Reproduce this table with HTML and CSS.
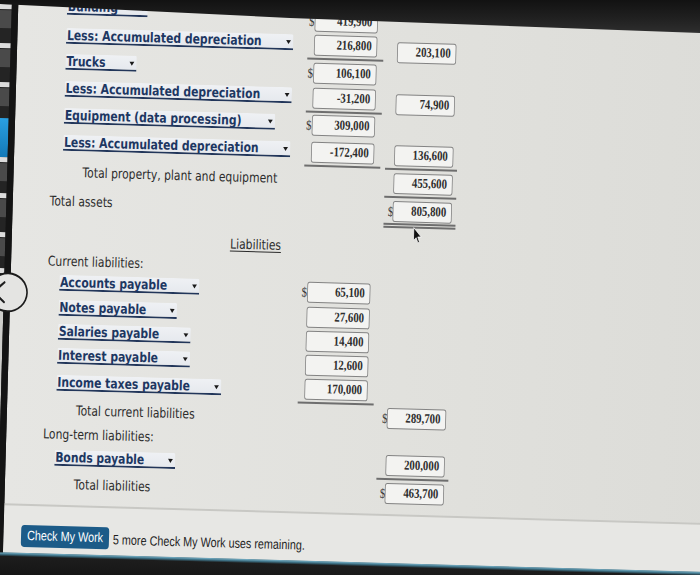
FILE: index.html
```html
<!DOCTYPE html>
<html lang="en">
<head>
<meta charset="utf-8">
<title>Balance sheet</title>
<link rel="stylesheet" href="styles.css">
</head>
<body>
<div class="screen">
  <div class="desk">
    <aside class="side">
      <div class="strip">
        <i class="w"></i><i class="g"></i>
        <i class="w"></i><i class="g"></i>
        <i class="w"></i><i class="g s"></i>
        <i class="b"></i>
        <i class="w"></i><i class="g s"></i>
        <i class="w"></i><i class="g"></i>
        <i class="w"></i><i class="g s"></i>
        <i class="w"></i>
      </div>
      <div class="rail"></div>
      <div class="back">
        <svg viewBox="0 0 50 40"><path d="M20 9 L5 20 L20 31" fill="none" stroke="#1e1e1e" stroke-width="2.6" stroke-linecap="round" stroke-linejoin="round"/></svg>
      </div>
    </aside>
    <main class="main">
      <section class="sheet">
        <div class="row h26">
          <div class="lab"><div class="sel sw101 up3"><span>Building</span><i class="caret"></i></div></div>
          <div class="c1 o2"><span class="usd">$</span><span class="box">419,900</span></div>
        </div>
        <div class="row h26">
          <div class="lab"><div class="sel sw284"><span>Less: Accumulated depreciation</span><i class="caret"></i></div></div>
          <div class="c1 ul"><span class="usd"></span><span class="box">216,800</span></div>
          <div class="c2 o5"><span class="usd"></span><span class="box">203,100</span></div>
        </div>
        <div class="row h27">
          <div class="lab"><div class="sel sw89"><span>Trucks</span><i class="caret"></i></div></div>
          <div class="c1 o2"><span class="usd">$</span><span class="box">106,100</span></div>
        </div>
        <div class="row h27">
          <div class="lab"><div class="sel sw284"><span>Less: Accumulated depreciation</span><i class="caret"></i></div></div>
          <div class="c1 ul"><span class="usd"></span><span class="box">-31,200</span></div>
          <div class="c2 o4"><span class="usd"></span><span class="box">74,900</span></div>
        </div>
        <div class="row h27">
          <div class="lab"><div class="sel sw264"><span>Equipment (data processing)</span><i class="caret"></i></div></div>
          <div class="c1"><span class="usd">$</span><span class="box">309,000</span></div>
        </div>
        <div class="row h29">
          <div class="lab"><div class="sel sw284"><span>Less: Accumulated depreciation</span><i class="caret"></i></div></div>
          <div class="c1 ul"><span class="usd"></span><span class="box">-172,400</span></div>
          <div class="c2 o1 ul"><span class="usd"></span><span class="box">136,600</span></div>
        </div>
        <div class="row h28">
          <div class="lab"><div class="txt t2">Total property, plant and equipment</div></div>
          <div class="c2 ul"><span class="usd"></span><span class="box">455,600</span></div>
        </div>
        <div class="row h39">
          <div class="lab"><div class="txt t1 o1">Total assets</div></div>
          <div class="c2 dbl"><span class="usd">$</span><span class="box">805,800</span>
            <svg class="cursor" viewBox="0 0 12 17"><path d="M1 1 L1 14 L4.2 11 L6.6 16.2 L8.6 15.3 L6.3 10.2 L10.6 10.2 Z" fill="#111" stroke="#fff" stroke-width="0.8" stroke-linejoin="round"/></svg>
          </div>
        </div>
        <div class="row h22">
          <div class="lab"><div class="txt hdr">Liabilities</div></div>
        </div>
        <div class="row h22">
          <div class="lab"><div class="txt t1">Current liabilities:</div></div>
        </div>
        <div class="row h25">
          <div class="lab"><div class="sel sw175"><span>Accounts payable</span><i class="caret"></i></div></div>
          <div class="c1"><span class="usd">$</span><span class="box">65,100</span></div>
        </div>
        <div class="row h24">
          <div class="lab"><div class="sel sw148"><span>Notes payable</span><i class="caret"></i></div></div>
          <div class="c1"><span class="usd"></span><span class="box">27,600</span></div>
        </div>
        <div class="row h24">
          <div class="lab"><div class="sel sw166"><span>Salaries payable</span><i class="caret"></i></div></div>
          <div class="c1"><span class="usd"></span><span class="box">14,400</span></div>
        </div>
        <div class="row h24">
          <div class="lab"><div class="sel sw166"><span>Interest payable</span><i class="caret"></i></div></div>
          <div class="c1"><span class="usd"></span><span class="box">12,600</span></div>
        </div>
        <div class="row h27">
          <div class="lab"><div class="sel sw206 o3"><span>Income taxes payable</span><i class="caret"></i></div></div>
          <div class="c1 ul"><span class="usd"></span><span class="box">170,000</span></div>
        </div>
        <div class="row h27">
          <div class="lab"><div class="txt t2 o3">Total current liabilities</div></div>
          <div class="c2"><span class="usd">$</span><span class="box">289,700</span></div>
        </div>
        <div class="row h20">
          <div class="lab"><div class="txt t1">Long-term liabilities:</div></div>
        </div>
        <div class="row h28">
          <div class="lab"><div class="sel sw151 o4"><span>Bonds payable</span><i class="caret"></i></div></div>
          <div class="c2 ul"><span class="usd"></span><span class="box">200,000</span></div>
        </div>
        <div class="row h31">
          <div class="lab"><div class="txt t2 o2">Total liabilities</div></div>
          <div class="c2"><span class="usd">$</span><span class="box">463,700</span></div>
        </div>
      </section>
      <footer class="foot">
        <button class="check" type="button">Check My Work</button>
        <span class="remain">5 more Check My Work uses remaining.</span>
      </footer>
    </main>
  </div>
  <div class="dock"></div>
</div>
<div class="topbar"></div>
</body>
</html>
```

FILE: styles.css
```css
* { box-sizing: border-box; }
html, body { margin: 0; padding: 0; }
body {
  width: 700px;
  height: 575px;
  overflow: hidden;
  position: relative;
  background: #1c1c1c;
  font-family: "DejaVu Sans", Verdana, sans-serif;
}

.screen {
  width: 920px;
  display: flex;
  flex-direction: column;
  transform-origin: 0 0;
  transform: rotate(1.6deg) scaleX(0.8);
}
.desk { display: flex; height: 552px; }

/* left window strip */
.side { position: relative; display: flex; width: 23px; flex-shrink: 0; }
.strip {
  width: 15px;
  padding-top: 4px;
  display: flex;
  flex-direction: column;
  background: linear-gradient(#242424 0, #242424 300px, #cdcdca 300px);
}
.strip i { display: block; flex-shrink: 0; }
.w { height: 5px; margin-bottom: 1px; background: #dcdcdc; }
.g { height: 18px; margin-bottom: 15px; background: #4a4a4a; }
.g.s { margin-bottom: 12px; }
.b { height: 39px; background: linear-gradient(#2aa0e2, #1379b8); }
.rail { width: 8px; background: #141414; }
.back {
  position: absolute;
  left: -5px;
  top: 272px;
  width: 50px;
  height: 40px;
  border-radius: 50%;
  border: 2.5px solid #1b1b1b;
  background: #e4e4e2;
}
.back svg { display: block; width: 100%; height: 100%; }

/* main sheet */
.main {
  flex: 1;
  display: flex;
  flex-direction: column;
  background: linear-gradient(90deg, #e6e6e3, #e1e1dd 55%, #dcdcd8);
}
.sheet { height: 503px; }

.row {
  display: grid;
  grid-template-columns: 363px 95px 6px 90px;
  align-items: start;
}
.h20 { height: 20px; } .h22 { height: 22px; } .h24 { height: 24px; }
.h25 { height: 25px; } .h26 { height: 26px; } .h27 { height: 27px; }
.h28 { height: 28px; } .h29 { height: 29px; } .h31 { height: 31px; }
.h39 { height: 39px; }

.o1 { margin-top: 1px; } .o2 { margin-top: 2px; } .o3 { margin-top: 3px; }
.o4 { margin-top: 4px; } .o5 { margin-top: 5px; } .up3 { margin-top: -3px; }

.lab { grid-column: 1; }

.sel {
  display: flex;
  justify-content: space-between;
  align-items: flex-start;
  height: 16px;
  margin-left: 61px;
  padding-left: 1px;
  background: linear-gradient(#eff1f4, #e6e9ee);
  border-bottom: 2px solid #22365a;
  border-radius: 2px 2px 0 0;
  color: #1d3762;
  font-weight: bold;
  font-size: 13.5px;
  line-height: 14px;
  white-space: nowrap;
}
.caret {
  width: 0;
  height: 0;
  margin: 6px 3px 0 0;
  border-left: 3.5px solid transparent;
  border-right: 3.5px solid transparent;
  border-top: 4px solid #1a1a1a;
}
.sw89 { width: 89px; } .sw101 { width: 101px; } .sw148 { width: 148px; }
.sw151 { width: 151px; } .sw166 { width: 166px; } .sw175 { width: 175px; }
.sw206 { width: 206px; } .sw264 { width: 264px; } .sw284 { width: 284px; }

.txt {
  font-size: 13.5px;
  line-height: 16px;
  color: #2c2c2c;
  white-space: nowrap;
}
.t1 { padding-left: 46px; }
.t2 { padding-left: 86px; }
.hdr { padding-left: 273px; text-decoration: underline; text-underline-offset: 2px; }

/* amount columns */
.c1 { grid-column: 2; display: flex; padding-left: 1px; }
.c2 { grid-column: 4; display: flex; padding-left: 5px; position: relative; }
.usd {
  flex-shrink: 0;
  font-family: "Liberation Serif", "Times New Roman", serif;
  font-size: 13.5px;
  line-height: 21px;
  color: #3a3a3a;
}
.c1 .usd { width: 7px; }
.c2 .usd { width: 6px; }
.box {
  height: 21px;
  border: 1.6px solid #838383;
  border-radius: 3px;
  background: #f3f3f1;
  padding-right: 6px;
  text-align: right;
  font-family: "Liberation Serif", "Times New Roman", serif;
  font-weight: bold;
  font-size: 13.5px;
  line-height: 18px;
  color: #2e2e2e;
}
.c1 .box { width: 79px; }
.c2 .box { width: 74px; }
.ul { border-bottom: 2px solid #6e6e6e; padding-bottom: 2px; }
.dbl { border-bottom: 5px double #6e6e6e; padding-bottom: 1px; }

.cursor {
  position: absolute;
  left: 37px;
  top: 25px;
  width: 12px;
  height: 17px;
}

/* footer */
.foot {
  flex: 1;
  display: flex;
  align-items: flex-start;
  padding: 19px 0 0 22px;
  border-top: 2px solid #c8c8c4;
  background: #e7e7e4;
}
.check {
  width: 110px;
  height: 22px;
  padding: 0;
  border: none;
  border-radius: 4px;
  background: #1c5b88;
  color: #ffffff;
  font-family: "Liberation Sans", Arial, sans-serif;
  font-size: 13.5px;
  line-height: 22px;
  text-align: center;
}
.remain {
  margin: 1.5px 0 0 5px;
  font-family: "Liberation Sans", Arial, sans-serif;
  font-size: 13.5px;
  line-height: 22px;
  color: #1e1e1e;
  white-space: nowrap;
}

.dock {
  height: 30px;
  background: linear-gradient(#7ab3c9 0, #3c6f83 2px, #1d1d1d 4px, #121212);
}

.topbar {
  position: absolute;
  left: 0;
  top: 0;
  width: 700px;
  height: 36px;
  background: linear-gradient(#121212, #202020 50%, #2c2c2c 85%, #3c3c3c);
  clip-path: polygon(0 0, 100% 0, 100% 33px, 41.4% 18px, 0 4px);
}
```
